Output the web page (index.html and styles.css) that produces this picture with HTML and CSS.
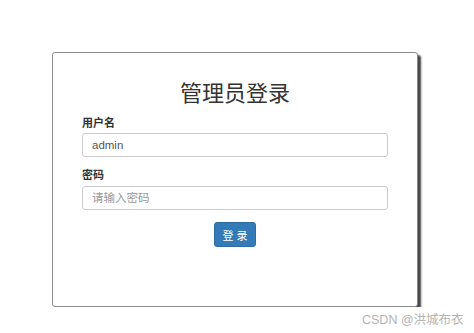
FILE: index.html
```html
<!DOCTYPE html>
<html lang="zh-CN">
<head>
    <meta charset="UTF-8">
    <meta name="viewport" content="width=device-width, initial-scale=1.0">
    <title>管理员登录</title>
    <link rel="stylesheet" href="styles.css">
</head>
<body>
    <form class="login-box">
        <h1>管理员登录</h1>
        <label for="username">用户名</label>
        <input type="text" id="username" name="username" value="admin">

        <label for="password">密码</label>
        <input type="password" id="password" name="password" placeholder="请输入密码">

        <div class="actions">
            <button type="button">登 录</button>
        </div>
    </form>
    <!-- watermark -->
    <div class="watermark">CSDN @洪城布衣</div>
</body>
</html>
```

FILE: styles.css
```css
body {
    font-family: 'Liberation Sans', 'Noto Sans CJK SC', sans-serif;
    background-color: #fff;
    margin: 0;
    padding: 52px 0 0 52px;
    color: #333;
}
.login-box {
    width: 306px;
    padding: 28px 29px 59px;
    border: 1px solid #8c8c8c;
    border-radius: 3px;
    box-shadow: 3px 3px 2px #444;
    background: white;
}
h1 {
    margin: 0 0 9px;
    font-size: 22px;
    line-height: 26px;
    font-weight: normal;
    text-align: center;
    color: #333;
}
label {
    display: block;
    font-size: 11px;
    line-height: 14px;
    font-weight: bold;
    margin-bottom: 3px;
}
input {
    display: block;
    width: 100%;
    height: 24px;
    padding: 0 9px;
    margin-bottom: 11px;
    border: 1px solid #ccc;
    border-radius: 3px;
    box-sizing: border-box;
    font-family: inherit;
    font-size: 11.5px;
    color: #555;
}
input::placeholder {
    color: #999;
}
#password {
    margin-bottom: 12px;
}
label[for="password"] {
    margin-bottom: 4px;
}
.actions {
    display: flex;
    justify-content: center;
}
button {
    width: 42px;
    height: 25px;
    padding: 0;
    background-color: #337ab7;
    border: 1px solid #2e6da4;
    border-radius: 3px;
    color: white;
    font-family: inherit;
    font-size: 11px;
    cursor: pointer;
}
.watermark {
    position: absolute;
    left: 362px;
    top: 312px;
    font-size: 12.5px;
    line-height: 16px;
    color: #b4b4b4;
}
```
